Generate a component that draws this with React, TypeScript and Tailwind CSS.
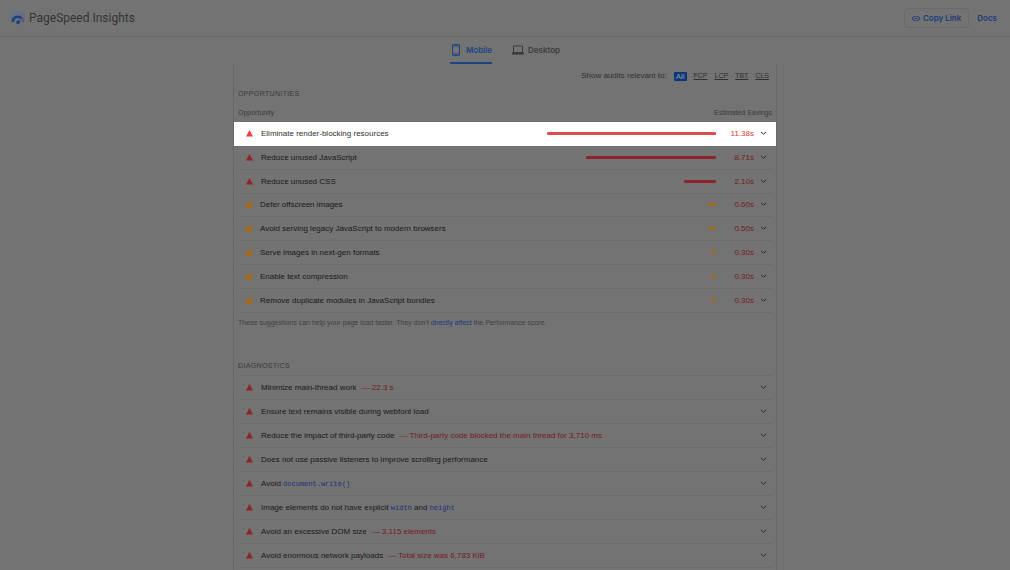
import { useState } from "react";

interface Opportunity {
  title: string;
  savings: string;
  bar: number;
}

interface Diagnostic {
  title: React.ReactNode;
  detail?: string;
}

const failing: Opportunity[] = [
  { title: "Eliminate render-blocking resources", savings: "11.38s", bar: 169 },
  { title: "Reduce unused JavaScript", savings: "8.71s", bar: 130 },
  { title: "Reduce unused CSS", savings: "2.10s", bar: 32 },
];

const average: Opportunity[] = [
  { title: "Defer offscreen images", savings: "0.60s", bar: 9 },
  { title: "Avoid serving legacy JavaScript to modern browsers", savings: "0.50s", bar: 8 },
  { title: "Serve images in next-gen formats", savings: "0.30s", bar: 5 },
  { title: "Enable text compression", savings: "0.30s", bar: 5 },
  { title: "Remove duplicate modules in JavaScript bundles", savings: "0.30s", bar: 5 },
];

const Code = ({ children }: { children: string }) => (
  <code className="font-['Liberation_Mono',monospace] text-[7px] text-[#1f2f7c]">{children}</code>
);

const diagnostics: Diagnostic[] = [
  { title: "Minimize main-thread work", detail: "22.3 s" },
  { title: "Ensure text remains visible during webfont load" },
  {
    title: "Reduce the impact of third-party code",
    detail: "Third-party code blocked the main thread for 3,710 ms",
  },
  { title: "Does not use passive listeners to improve scrolling performance" },
  { title: <>Avoid <Code>document.write()</Code></> },
  {
    title: <>Image elements do not have explicit <Code>width</Code> and <Code>height</Code></>,
  },
  { title: "Avoid an excessive DOM size", detail: "3,115 elements" },
  { title: "Avoid enormous network payloads", detail: "Total size was 6,783 KiB" },
];

const metrics = ["All", "FCP", "LCP", "TBT", "CLS"];

const Logo = () => (
  <svg viewBox="0 0 28 28" className="h-3.5 w-3.5">
    <path d="M0 1h28v17H0z" fill="#66707f" />
    <path d="M0 1h28v4H0z" fill="#62738c" />
    <path d="M5 22a9 9 0 0 1 18 0z" fill="#737373" />
    <path d="M3.500 22A10.500 10.500 0 0 1 21.400 14.600" fill="none" stroke="#1c3f86" strokeWidth="5" />
    <path d="M21.400 14.600A10.500 10.500 0 0 1 24.500 22" fill="none" stroke="#5b5484" strokeWidth="5" />
    <path d="M11 21l6-4 1 6z" fill="#1c3f86" />
    <circle cx="14" cy="23" r="3.600" fill="#1c3f86" />
  </svg>
);

const Chevron = ({ className }: { className: string }) => (
  <svg viewBox="0 0 14 14" className={`h-[7px] w-[7px] ${className}`}>
    <path d="M2 4l5 4.500L12 4" fill="none" stroke="currentColor" strokeWidth="2" />
  </svg>
);

const Triangle = ({ className }: { className: string }) => (
  <svg viewBox="0 0 7 7" className={`h-[7px] w-[7px] ${className}`}>
    <path d="M3.500 0L7 6.500H0z" fill="currentColor" />
  </svg>
);

export default function App() {
  const [device, setDevice] = useState("Mobile");
  const [metric, setMetric] = useState("All");

  const tabStyle = (name: string) =>
    device === name ? "border-[#1c4382] text-[#1c4382]" : "border-transparent text-[#3b3b3b]";

  return (
    <div className="flex min-h-screen flex-col bg-[#737373] font-['Liberation_Sans',Arial,sans-serif] text-[8px] leading-3 text-[#181818]">
      <header className="flex h-[37px] items-center justify-between border-b border-[#676767] pr-[13px] pl-[11px]">
        <div className="flex items-center gap-1">
          <Logo />
          <h1 className="font-[Roboto,sans-serif] text-[12px] leading-4 text-[#333333]">
            PageSpeed Insights
          </h1>
        </div>
        <div className="flex items-center gap-2 font-[Inter,sans-serif] font-semibold text-[#1c3c78]">
          <button className="flex h-5 items-center gap-[3px] rounded-sm border border-[#696969] px-[7px]">
            <svg viewBox="0 0 16 10" className="h-[5px] w-2">
              <path
                d="M7 1H5a4 4 0 0 0 0 8h2M9 1h2a4 4 0 0 1 0 8H9M5 5h6"
                fill="none"
                stroke="currentColor"
                strokeWidth="2"
              />
            </svg>
            Copy Link
          </button>
          <a href="#docs">Docs</a>
        </div>
      </header>

      {/* device tabs */}
      <nav className="flex h-[27px] justify-center gap-5 font-[Inter,sans-serif] font-semibold">
        <button
          onClick={() => setDevice("Mobile")}
          className={`flex items-center gap-1 border-b-2 ${tabStyle("Mobile")}`}
        >
          <svg viewBox="0 0 24 24" className="h-3 w-3">
            <path
              d="M6.500 1h11A1.500 1.500 0 0 1 19 2.500v19a1.500 1.500 0 0 1-1.500 1.500h-11A1.500 1.500 0 0 1 5 21.500v-19A1.500 1.500 0 0 1 6.500 1zM5 4h14M5 20h14"
              fill="none"
              stroke="currentColor"
              strokeWidth="2"
            />
          </svg>
          Mobile
        </button>
        <button
          onClick={() => setDevice("Desktop")}
          className={`flex items-center gap-1 border-b-2 ${tabStyle("Desktop")}`}
        >
          <svg viewBox="0 0 24 20" className="h-[10px] w-3">
            <path d="M3 2h18v13H3z" fill="none" stroke="currentColor" strokeWidth="2" />
            <path d="M0 15h24v4H0z" fill="currentColor" />
          </svg>
          Desktop
        </button>
      </nav>

      <main className="mx-auto flex w-full max-w-[544px] flex-1 flex-col border-x border-[#676767] px-1">
        <div className="flex h-6 items-center justify-end gap-[7px] pr-[3px] text-[#303030]">
          <span>Show audits relevant to:</span>
          {metrics.map((item) => (
            <button
              key={item}
              onClick={() => setMetric(item)}
              className={
                metric === item
                  ? "h-[9px] rounded-[1px] bg-[#0d3578] px-0.5 leading-[9px] text-[#8f9bb0]"
                  : "text-[7px] underline"
              }
            >
              {item}
            </button>
          ))}
        </div>

        {/* opportunities */}
        <h2 className="text-[7px] tracking-wider text-[#3a3a3a]">OPPORTUNITIES</h2>
        <div className="mt-2 flex h-[14px] justify-between text-[7px] leading-[10px] text-[#3a3a3a]">
          <span>Opportunity</span>
          <span>Estimated Savings</span>
        </div>

        <ul>
          {failing.map((item, i) => (
            <li
              key={item.title}
              className={
                i === 0
                  ? "-mx-1 bg-white px-1 pb-px text-[#303030]"
                  : "border-b border-[#6c6c6c]"
              }
            >
              <button className="flex h-[23px] w-full items-center pr-[5px] pl-2 text-left">
                <Triangle className={i === 0 ? "text-[#e8413f]" : "text-[#942226]"} />
                <span className="ml-2 flex-1">{item.title}</span>
                <span
                  className={`h-[3px] rounded-[1px] ${i === 0 ? "bg-[#e04b4b]" : "bg-[#8c262a]"}`}
                  style={{ width: item.bar }}
                />
                <span className={`w-[38px] text-right ${i === 0 ? "text-[#d8342f]" : "text-[#761a1c]"}`}>
                  {item.savings}
                </span>
                <Chevron className="ml-1.5 text-[#303030]" />
              </button>
            </li>
          ))}
        </ul>
        <ul className="-mt-px">
          {average.map((item) => (
            <li key={item.title} className="border-b border-[#6c6c6c]">
              <button className="flex h-[23px] w-full items-center pr-[5px] pl-2 text-left">
                <span className="h-1.5 w-1.5 bg-[#a06a20]" />
                <span className="ml-2 flex-1">{item.title}</span>
                <span className="h-[3px] bg-[#9a6a28]" style={{ width: item.bar }} />
                <span className="w-[38px] text-right text-[#761a1c]">{item.savings}</span>
                <Chevron className="ml-1.5 text-[#303030]" />
              </button>
            </li>
          ))}
        </ul>

        <p className="mt-1 text-[7px] text-[#404040]">
          These suggestions can help your page load faster. They don't{" "}
          <a href="#scoring" className="text-[#183c7c]">directly affect</a> the Performance score.
        </p>

        {/* diagnostics */}
        <h2 className="mt-[31px] text-[7px] tracking-wider text-[#3a3a3a]">DIAGNOSTICS</h2>
        <ul className="mt-[3px] border-t border-[#6c6c6c]">
          {diagnostics.map((item, i) => (
            <li key={i} className="border-b border-[#6c6c6c]">
              <button className="flex h-[23px] w-full items-center pr-[5px] pl-2 text-left">
                <Triangle className="text-[#942226]" />
                <span className="ml-2 flex-1">
                  {item.title}
                  {item.detail && <span className="ml-[5px] text-[#761a1c]">— {item.detail}</span>}
                </span>
                <Chevron className="text-[#303030]" />
              </button>
            </li>
          ))}
        </ul>
      </main>
    </div>
  );
}
